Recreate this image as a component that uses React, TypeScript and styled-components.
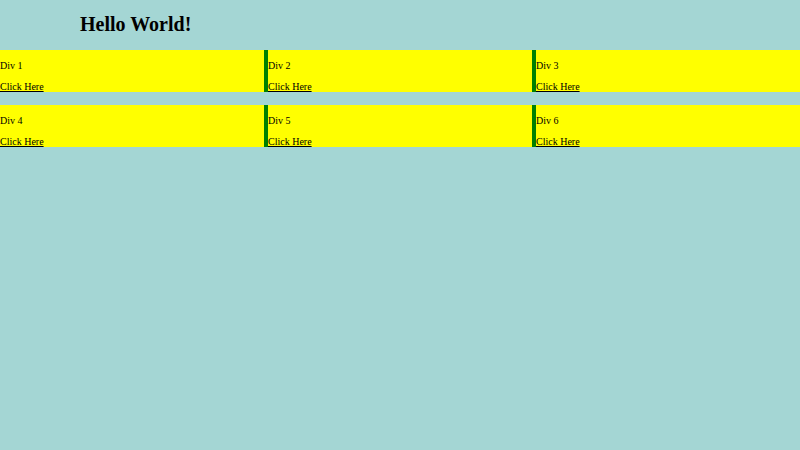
import { createGlobalStyle, styled } from 'styled-components';

const GlobalStyle = createGlobalStyle`
  html,
  body {
    margin: 0;
    background: #a4d6d4;
    font-family: 'Liberation Serif', 'Times New Roman', serif;
    color: #000;
  }
`;

const Page = styled.div`
  width: 800px;
  min-height: 450px;
`;

const Title = styled.h1`
  margin: 13.4px 0 13.4px 80px;
  font-size: 20px;
  font-weight: bold;
  line-height: 23px;
`;

const Row = styled.div`
  display: flex;
  background: #ffff00;
  margin-bottom: 13px;
`;

const Cell = styled.div<{ $divider?: boolean }>`
  flex: none;
  width: 33%;
  box-sizing: content-box;
  border-left: ${(p) => (p.$divider ? '4px solid #008000' : 'none')};
  font-size: 10px;
  line-height: 11px;
`;

const Label = styled.p`
  margin: 10px 0;
`;

const Link = styled.a`
  color: #000;
  text-decoration: underline;
  cursor: pointer;
`;

const rows = [
  [1, 2, 3],
  [4, 5, 6],
];

export default function App() {
  return (
    <Page>
      <GlobalStyle />
      <Title>Hello World!</Title>
      {rows.map((row) => (
        <Row key={row[0]}>
          {row.map((n, i) => (
            <Cell key={n} $divider={i > 0}>
              <Label>Div {n}</Label>
              <Link href="#">Click Here</Link>
            </Cell>
          ))}
        </Row>
      ))}
    </Page>
  );
}
